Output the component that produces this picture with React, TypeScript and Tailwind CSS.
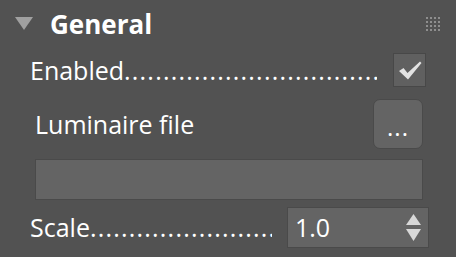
import React from "react";

const DOTS = ".".repeat(60);

function Leader({ label }: { label: string }) {
  return (
    <div className="flex min-w-0 flex-1 items-baseline overflow-hidden whitespace-nowrap">
      <span>{label}</span>
      <span className="min-w-0 flex-1 overflow-hidden tracking-[1.2px]">{DOTS}</span>
    </div>
  );
}

function Grip() {
  return (
    <div className="grid grid-cols-4 gap-[2px]">
      {Array.from({ length: 16 }).map((_, i) => (
        <div key={i} className="h-[2px] w-[2px] bg-[#8e8e8e]" />
      ))}
    </div>
  );
}

export default function App() {
  return (
    <div
      className="h-[257px] w-[456px] overflow-hidden bg-[#525252] text-white"
      style={{ fontFamily: '"Open Sans", "Noto Sans", sans-serif' }}
    >
      {/* Header */}
      <div className="flex h-[48px] items-center pl-[15px] pr-[16px]">
        <svg width="18" height="13" viewBox="0 0 18 13" className="mb-[2px]">
          <polygon points="0,0 18,0 9,13" fill="#a0a0a0" />
        </svg>
        <span className="ml-[17px] flex-1 text-[26px] font-bold leading-none">General</span>
        <Grip />
      </div>

      {/* Enabled */}
      <div className="mt-[5px] flex h-[34px] items-center pl-[30px] pr-[30px] text-[25px] leading-none">
        <Leader label="Enabled" />
        <div className="ml-[16px] flex h-[34px] w-[33px] items-center justify-center border border-[#484848] bg-[#606060]">
          <svg width="23" height="19" viewBox="0 0 23 19" className="ml-[2px]">
            <path d="M0 10 L4.5 7 L8.5 12 L21 0.5 L22.5 2 L9 18.5 Z" fill="#e2e2e2" />
          </svg>
        </div>
      </div>

      {/* Luminaire file */}
      <div className="mt-[12px] flex h-[50px] items-center pl-[35px] pr-[33px] text-[25px] leading-none">
        <span className="flex-1">Luminaire file</span>
        <div className="flex h-[50px] w-[50px] items-end justify-center rounded-[7px] border border-[#4a4a4a] bg-[#646464] pb-[9px] text-[24px] leading-none tracking-[1px]">
          ...
        </div>
      </div>

      {/* Path field */}
      <div className="ml-[35px] mt-[10px] h-[41px] w-[388px] border border-[#4a4a4a] bg-[#646464]" />

      {/* Scale */}
      <div className="mt-[7px] flex h-[41px] items-center pl-[30px] pr-[27px] text-[25px] leading-none">
        <Leader label="Scale" />
        <div className="ml-[15px] flex h-[41px] w-[142px] items-center border border-[#4a4a4a] bg-[#646464] pl-[7px] pr-[7px]">
          <span className="flex-1">1.0</span>
          <svg width="15" height="27" viewBox="0 0 15 27">
            <polygon points="7.5,0 15,11 0,11" fill="#d8d8d8" />
            <polygon points="0,15 15,15 7.5,27" fill="#d8d8d8" />
          </svg>
        </div>
      </div>
    </div>
  );
}
